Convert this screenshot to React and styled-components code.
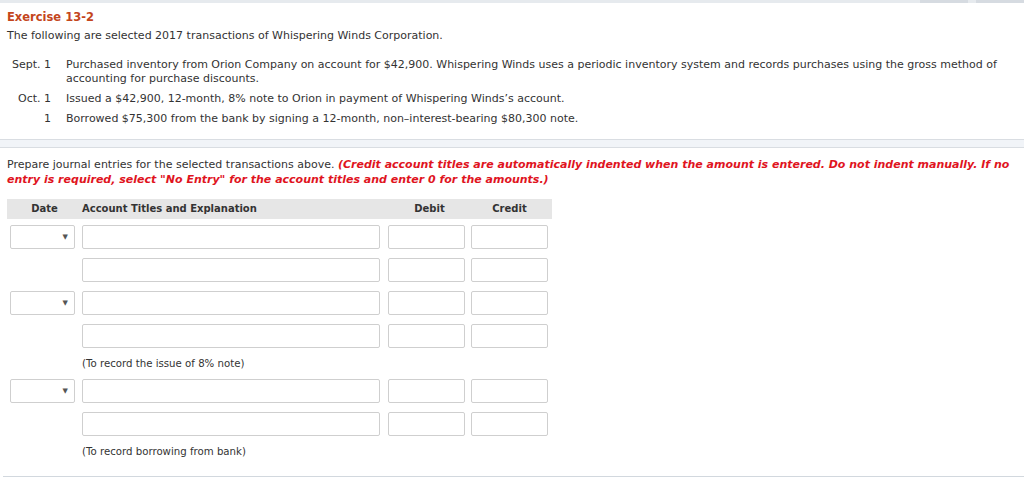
import React from 'react'
import styled, { createGlobalStyle } from "styled-components";

const GlobalStyle = createGlobalStyle`
    body {
        margin:0;
        background:#fff;
        font-family:"DejaVu Sans", Verdana, sans-serif;
        color:#333;
    }
`

const TopBar = styled.div`
    height:3px;
    background-color:#e6eaee;
    display:flex;
    justify-content:flex-end;
    gap:8px;
    span {
        width:48px;
        height:3px;
        background-color:#d6dbe1;
    }
`

const Content = styled.div`
    padding:0 7px;
`

const Title = styled.h2`
    margin:7px 0 0;
    font-size:11.5px;
    font-weight:bold;
    color:#c4461c;
    line-height:15px;
`

const Intro = styled.p`
    margin:3px 0 0;
    font-size:11px;
    line-height:15px;
`

const Transactions = styled.div`
    display:grid;
    grid-template-columns:44px 1fr;
    column-gap:15px;
    row-gap:6px;
    margin:15px 0 0 0;
    font-size:11px;
    line-height:14px;
    .date {
        text-align:right;
    }
`

const Band = styled.div`
    margin:13px 0 0 0;
    height:7px;
    border-top:1px solid #d9dde2;
    border-bottom:1px solid #d9dde2;
    background-color:#f1f4f8;
`

const Prompt = styled.p`
    margin:9px 0 0;
    font-size:11px;
    line-height:15px;
    em {
        color:#e0141e;
        font-weight:bold;
    }
`

const Journal = styled.div`
    margin-top:12px;
    width:545px;
    display:grid;
    grid-template-columns:75px 306px 83px 81px;
`

const Head = styled.div`
    background-color:#e6e6e6;
    height:20px;
    line-height:20px;
    font-size:10px;
    font-weight:bold;
    color:#333;
    text-align:${(props) => props.align || "center"};
    padding-left:${(props) => props.pad || 0};
    padding-right:${(props) => props.right || 0};
`

const Cell = styled.div`
    margin-top:${(props) => props.top || "9px"};
    display:flex;
    align-items:center;
    height:24px;
`

const Box = styled.div`
    width:${(props) => props.w}px;
    height:24px;
    box-sizing:border-box;
    border:1px solid #cfcfcf;
    border-radius:2px;
    background:#fff;
`

const Select = styled(Box)`
    margin-left:3px;
    display:flex;
    align-items:center;
    justify-content:flex-end;
    padding-right:6px;
    font-size:7px;
    color:#555;
`

const Note = styled.div`
    grid-column:2 / 5;
    margin-top:9px;
    font-size:10.2px;
    line-height:14px;
    color:#333;
`

const Footer = styled.div`
    margin:17px 0 0 3px;
    height:8px;
    border-top:1px solid #d2d8de;
    border-left:1px solid #d2d8de;
    background-color:#f4f6f9;
`

function Row({ date, top }) {
    return (
        <>
            <Cell top={top}>{date && <Select w={65}>▼</Select>}</Cell>
            <Cell top={top}><Box w={298} /></Cell>
            <Cell top={top}><Box w={77} /></Cell>
            <Cell top={top}><Box w={77} /></Cell>
        </>
    )
}

function App() {
    return (
        <>
            <GlobalStyle />
            <TopBar><span /><span /></TopBar>
            <Content>
                <Title>Exercise 13-2</Title>
                <Intro>The following are selected 2017 transactions of Whispering Winds Corporation.</Intro>
                <Transactions>
                    <div className="date">Sept. 1</div>
                    <div>Purchased inventory from Orion Company on account for $42,900. Whispering Winds uses a periodic inventory system and records purchases using the gross method of accounting for purchase discounts.</div>
                    <div className="date">Oct. 1</div>
                    <div>Issued a $42,900, 12-month, 8% note to Orion in payment of Whispering Winds’s account.</div>
                    <div className="date">1</div>
                    <div>Borrowed $75,300 from the bank by signing a 12-month, non–interest-bearing $80,300 note.</div>
                </Transactions>
            </Content>
            <Band />
            <Content>
                <Prompt>
                    Prepare journal entries for the selected transactions above. <em>(Credit account titles are automatically indented when the amount is entered. Do not indent manually. If no entry is required, select "No Entry" for the account titles and enter 0 for the amounts.)</em>
                </Prompt>
                <Journal>
                    <Head>Date</Head>
                    <Head align="left" pad="0">Account Titles and Explanation</Head>
                    <Head>Debit</Head>
                    <Head right="4px">Credit</Head>
                    <Row date top="6px" />
                    <Row />
                    <Row date />
                    <Row />
                    <Note>(To record the issue of 8% note)</Note>
                    <Row date top="8px" />
                    <Row />
                    <Note>(To record borrowing from bank)</Note>
                </Journal>
            </Content>
            <Footer />
        </>
    )
}

export default App
